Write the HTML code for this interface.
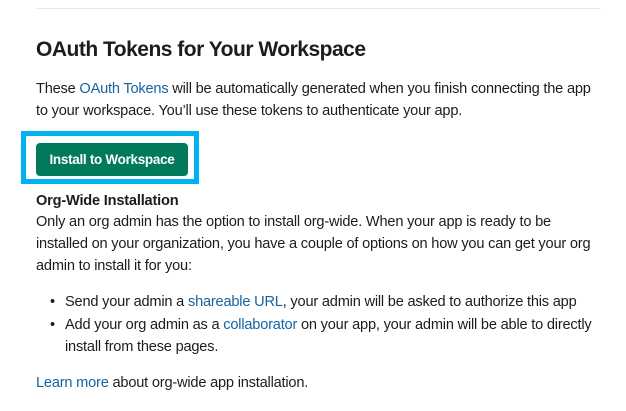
<!DOCTYPE html>
<html><head><style>
body{margin:0;background:#fff;font-family:"Liberation Sans",sans-serif;color:#1d1c1d;width:626px;height:411px;overflow:hidden;position:relative}
.a{position:absolute;white-space:nowrap;font-size:14.6px;letter-spacing:-0.2px}
a{color:#1264a3;text-decoration:none}
</style></head><body>
<div style="position:absolute;left:36px;top:8px;width:565px;height:1px;background:#e8e8e8"></div>
<div class="a" style="left:36px;top:38px;font-size:21px;font-weight:bold;letter-spacing:-0.5px;color:#1d1c1d">OAuth Tokens for Your Workspace</div>
<div class="a" style="left:36px;top:81px">These <a>OAuth Tokens</a> will be automatically generated when you finish connecting the app</div>
<div class="a" style="left:36px;top:103px">to your workspace. You’ll use these tokens to authenticate your app.</div>
<div style="position:absolute;left:21px;top:131px;width:168px;height:43px;border:5px solid #00b3f0;background:#fff"></div>
<div style="position:absolute;left:36px;top:143px;width:152px;height:33px;background:#007a5a;border-radius:4px;color:#fff;font-weight:bold;font-size:13.5px;letter-spacing:-0.3px;line-height:33px;text-align:center">Install to Workspace</div>
<div class="a" style="left:36px;top:193px;font-weight:bold">Org-Wide Installation</div>
<div class="a" style="left:36px;top:214px">Only an org admin has the option to install org-wide. When your app is ready to be</div>
<div class="a" style="left:36px;top:236px">installed on your organization, you have a couple of options on how you can get your org</div>
<div class="a" style="left:36px;top:258px">admin to install it for you:</div>
<div class="a" style="left:50px;top:294px">•</div>
<div class="a" style="left:65px;top:294px">Send your admin a <a>shareable URL</a>, your admin will be asked to authorize this app</div>
<div class="a" style="left:50px;top:317px">•</div>
<div class="a" style="left:65px;top:317px">Add your org admin as a <a>collaborator</a> on your app, your admin will be able to directly</div>
<div class="a" style="left:65px;top:339px">install from these pages.</div>
<div class="a" style="left:36px;top:375px"><a>Learn more</a> about org-wide app installation.</div>
</body></html>
